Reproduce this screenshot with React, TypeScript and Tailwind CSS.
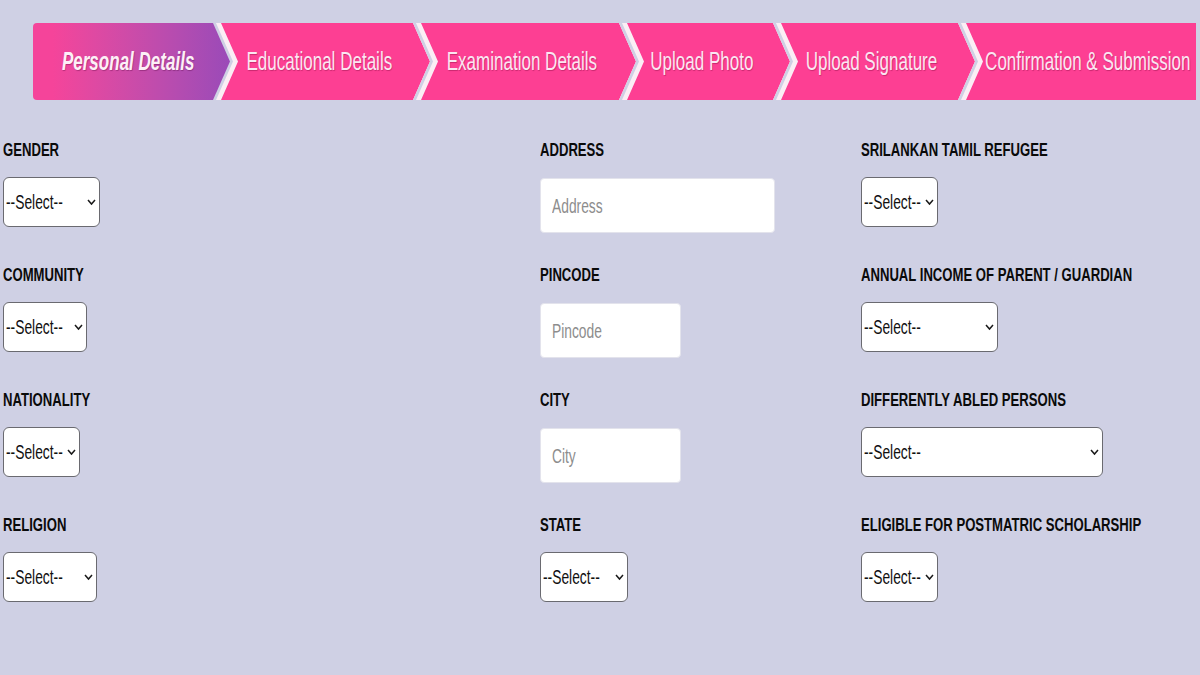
import React from "react";

interface Step {
  label: string;
  width: number;
}

const STEPS: Step[] = [
  { label: "Personal Details", width: 197 },
  { label: "Educational Details", width: 214 },
  { label: "Examination Details", width: 220 },
  { label: "Upload Photo", width: 168 },
  { label: "Upload Signature", width: 199 },
  { label: "Confirmation & Submission", width: 262 },
];

type Field =
  | { kind: "select"; label: string; width: number }
  | { kind: "input"; label: string; width: number; placeholder: string };

const COLUMNS: { width: string; fields: Field[] }[] = [
  {
    width: "w-[537px]",
    fields: [
      { kind: "select", label: "GENDER", width: 97 },
      { kind: "select", label: "COMMUNITY", width: 84 },
      { kind: "select", label: "NATIONALITY", width: 77 },
      { kind: "select", label: "RELIGION", width: 94 },
    ],
  },
  {
    width: "w-[321px]",
    fields: [
      { kind: "input", label: "ADDRESS", width: 235, placeholder: "Address" },
      { kind: "input", label: "PINCODE", width: 141, placeholder: "Pincode" },
      { kind: "input", label: "CITY", width: 141, placeholder: "City" },
      { kind: "select", label: "STATE", width: 88 },
    ],
  },
  {
    width: "flex-1",
    fields: [
      { kind: "select", label: "SRILANKAN TAMIL REFUGEE", width: 77 },
      { kind: "select", label: "ANNUAL INCOME OF PARENT / GUARDIAN", width: 137 },
      { kind: "select", label: "DIFFERENTLY ABLED PERSONS", width: 242 },
      { kind: "select", label: "ELIGIBLE FOR POSTMATRIC SCHOLARSHIP", width: 77 },
    ],
  },
];

// the screenshot is squeezed sideways, so every text run gets the same narrow scale
function Narrow({ children, center }: { children: React.ReactNode; center?: boolean }) {
  return (
    <span
      className={
        center
          ? "inline-block whitespace-nowrap origin-center scale-x-[0.655]"
          : "inline-block whitespace-nowrap origin-left scale-x-[0.69]"
      }
    >
      {children}
    </span>
  );
}

function Stepper() {
  return (
    <div className="flex h-[77px] w-[1163px] overflow-hidden">
      {STEPS.map((step, i) => {
        const first = i === 0;
        return (
          <div
            key={step.label}
            style={{ width: step.width }}
            className={
              first
                ? "relative h-full shrink-0"
                : "relative -ml-[14px] h-full shrink-0 bg-[#fbeef5] [clip-path:polygon(0_0,calc(100%-17px)_0,100%_50%,calc(100%-17px)_100%,0_100%,17px_50%)]"
            }
          >
            <div
              className={
                first
                  ? "flex h-full items-center justify-center rounded-l-[4px] bg-linear-to-r from-[#f5449a] from-10% to-[#9a4ab8] pr-[17px] pl-[10px] text-[26px] font-bold italic text-[#fdf0f7] [clip-path:polygon(0_0,calc(100%-17px)_0,100%_50%,calc(100%-17px)_100%,0_100%)] [text-shadow:1px_1px_1px_rgba(80,0,60,0.35)]"
                  : "flex h-full items-center justify-center bg-[#fd3f93] pr-[24px] pl-[16px] text-[26px] text-[#fbe6f2] [clip-path:polygon(5px_0,calc(100%-17px)_0,100%_50%,calc(100%-17px)_100%,5px_100%,22px_50%)] [text-shadow:1px_1px_1px_rgba(110,0,50,0.35)]"
              }
            >
              <Narrow center>{step.label}</Narrow>
            </div>
          </div>
        );
      })}
    </div>
  );
}

function Chevron() {
  return (
    <svg width="9" height="7" viewBox="0 0 9 7" className="absolute right-[3px] top-1/2 -translate-y-1/2">
      <polyline points="1,1.5 4.5,5.5 8,1.5" fill="none" stroke="#1a1a1a" strokeWidth="1.5" />
    </svg>
  );
}

function FieldBox({ field }: { field: Field }) {
  if (field.kind === "input") {
    return (
      <div
        style={{ width: field.width }}
        className="mt-[16px] flex h-[55px] items-center overflow-hidden rounded-[4px] border border-[#e3e3ec] bg-white pl-[11px] text-[20px] text-[#8d8d8d]"
      >
        <Narrow>{field.placeholder}</Narrow>
      </div>
    );
  }
  return (
    <div
      style={{ width: field.width }}
      className="relative mt-[15px] flex h-[50px] items-center overflow-hidden rounded-[6px] border border-[#6a6a70] bg-white pl-[2px] text-[20px] text-[#111]"
    >
      <Narrow>--Select--</Narrow>
      <Chevron />
    </div>
  );
}

export default function App() {
  return (
    <div className="flex h-[675px] w-[1200px] overflow-hidden bg-[#cfd0e4] font-['Liberation_Sans',Arial,sans-serif]">
      <div className="flex-1">
        <div className="pt-[23px] pl-[33px]">
          <Stepper />
        </div>

        <div className="mt-[38px] flex pl-[3px]">
          {COLUMNS.map((col, c) => (
            <div key={c} className={col.width}>
              {col.fields.map((field) => (
                <div key={field.label} className="h-[125px]">
                  <div className="h-[24px] text-[19px] leading-[24px] font-bold text-[#0a0a0a]">
                    <Narrow>{field.label}</Narrow>
                  </div>
                  <FieldBox field={field} />
                </div>
              ))}
            </div>
          ))}
        </div>
      </div>

      {/* page scrollbar at the right edge */}
      <div className="mt-[97px] flex w-[4px] flex-col bg-[#ebebf2]">
        <div className="h-[205px]" />
        <div className="flex-1 border-l-2 border-[#a9a9b0]" />
      </div>
    </div>
  );
}
